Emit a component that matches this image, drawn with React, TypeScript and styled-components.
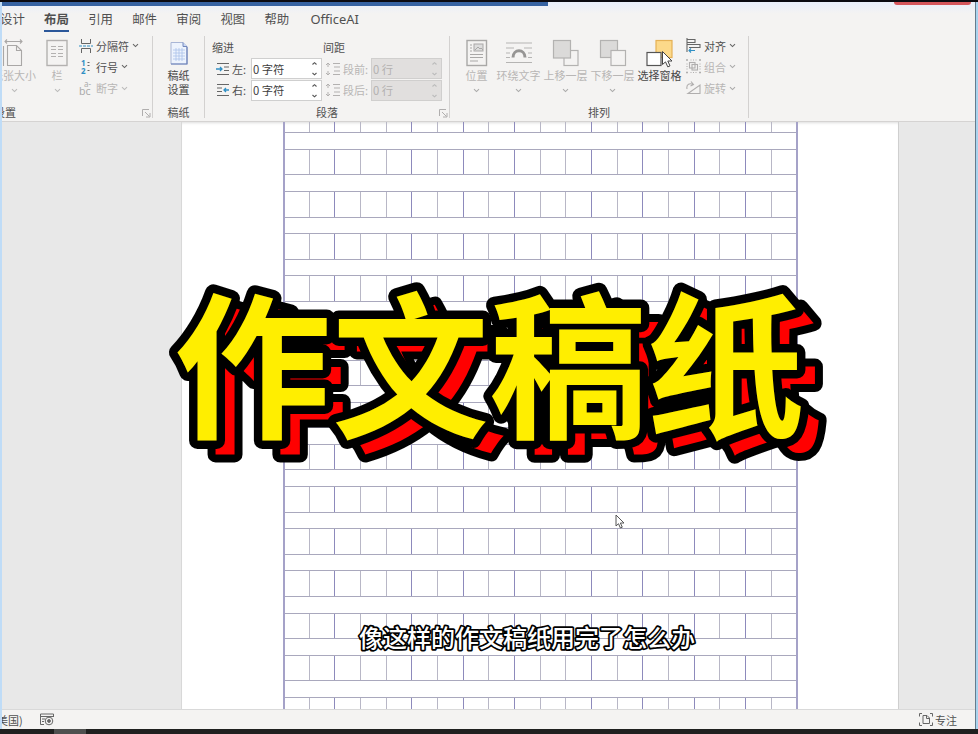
import React from "react";
import styled, { createGlobalStyle, css } from "styled-components";

const Global = createGlobalStyle`
  * { box-sizing: border-box; }
  html, body { margin: 0; padding: 0; overflow: hidden; }
  body {
    font-family: "Noto Sans CJK SC", "Noto Sans", sans-serif;
    font-size: 11px;
    color: #505050;
  }
`;

const ink = "#666";
const faded = "#b8b6b5";
const accent = "#2f8fc4";

const Screen = styled.div`
  position: relative;
  width: 978px;
  height: 734px;
  display: flex;
  flex-direction: column;
  overflow: hidden;
  background: #1f1f1f;
`;
const TopEdge = styled.div`
  flex: none;
  height: 2px;
  background: #0b0a10;
`;
const AppWindow = styled.div`
  height: 727px;
  display: flex;
  flex-direction: column;
  border-left: 2px solid #bfdcf7;
  border-right: 2px solid #a9d3ee;
  background: #f4f3f2;
  box-shadow: inset -1px 0 0 #667c8c;
  overflow: hidden;
`;
const TitleBar = styled.div`
  flex: none;
  display: flex;
  justify-content: space-between;
  height: 12px;
  background: linear-gradient(#e9eefa, #f4f3f2);
  margin-right: 1px;
`;
const TitleBlue = styled.div`
  width: 546px;
  height: 4px;
  background: #3662a2;
`;
const CloseButton = styled.div`
  width: 77px;
  height: 3px;
  margin-right: 4px;
  border-radius: 0 0 4px 4px;
  background: #d5565b;
`;

const Tabs = styled.nav`
  flex: none;
  height: 22px;
  margin-top: -4px;
  display: flex;
  gap: 19.3px;
  font-size: 12.4px;
  line-height: 19px;
  white-space: nowrap;
`;
const Tab = styled.span<{ $active?: boolean; $first?: boolean }>`
  height: 22px;
  ${(p) => p.$first && css`margin-left: -2px;`}
  ${(p) =>
    p.$active &&
    css`
      font-weight: 700;
      border-bottom: 2px solid #2b579a;
    `}
`;
const TabLatin = styled(Tab)`
  font-family: "Noto Sans", sans-serif;
  font-size: 12.9px;
  margin-left: 2px;
`;

const Ribbon = styled.div`
  flex: none;
  height: 90px;
  padding-top: 4px;
  display: flex;
  margin-right: 1px;
  border-bottom: 1px solid #d5d3d2;
`;
const Group = styled.section<{ $w: number }>`
  flex: none;
  width: ${(p) => p.$w}px;
  height: 82px;
  border-right: 1px solid #d3d1d0;
  display: flex;
  flex-direction: column;
`;
const GroupBody = styled.div<{ $pad?: number }>`
  flex: none;
  height: 68px;
  display: flex;
  padding-left: ${(p) => p.$pad ?? 0}px;
`;
const GroupFoot = styled.div<{ $start?: boolean }>`
  flex: none;
  height: 17px;
  display: grid;
  grid-template-columns: ${(p) => (p.$start ? "0 1fr 14px" : "14px 1fr 14px")};
  align-items: center;
  text-align: center;
  line-height: 17px;
  svg { margin: 1px 0 0 4px; }
  span { grid-column: 2; text-align: ${(p) => (p.$start ? "left" : "center")}; }
  span { margin-left: ${(p) => (p.$start ? "-8px" : "0")}; }
`;
const BigButton = styled.div<{ $w: number; $dim?: boolean; $ml?: number }>`
  flex: none;
  width: ${(p) => p.$w}px;
  margin-left: ${(p) => p.$ml ?? 0}px;
  padding-top: 2px;
  display: flex;
  flex-direction: column;
  align-items: center;
  white-space: nowrap;
  color: ${(p) => (p.$dim ? faded : "#484848")};
  line-height: 13.5px;
  svg { flex: none; }
`;
const BigLabel = styled.span`
  margin-top: 1px;
  text-align: center;
`;
const ChevronBox = styled.span`
  margin-top: 5px;
  line-height: 0;
`;
const SmallColumn = styled.div<{ $ml: number }>`
  display: flex;
  flex-direction: column;
  margin-left: ${(p) => p.$ml}px;
  margin-top: -1px;
`;
const SmallRow = styled.div<{ $dim?: boolean }>`
  flex: none;
  height: 21.3px;
  display: flex;
  align-items: center;
  gap: 3px;
  white-space: nowrap;
  color: ${(p) => (p.$dim ? faded : "#505050")};
`;

const Paragraph = styled.div`
  width: 100%;
  height: 65px;
  padding-left: 8px;
  display: grid;
  grid-template-columns: 111px 1fr;
  grid-template-rows: 22px 21.5px 21.5px;
  align-items: center;
`;
const Heading = styled.span`
  margin-left: -1px;
`;
const Field = styled.label<{ $dim?: boolean; $indent?: boolean }>`
  display: flex;
  align-items: center;
  white-space: nowrap;
  padding-left: ${(p) => (p.$indent ? 3 : 1)}px;
  color: ${(p) => (p.$dim ? faded : "#505050")};
  svg { flex: none; }
`;
const FieldName = styled.span<{ $w: number }>`
  width: ${(p) => p.$w}px;
  padding-left: 2px;
`;
const Spinner = styled.span<{ $dim?: boolean }>`
  width: 71px;
  height: 21px;
  padding: 0 3px 0 1px;
  display: flex;
  align-items: center;
  justify-content: space-between;
  font-size: 11.3px;
  border: 1px solid ${(p) => (p.$dim ? "#d0cfce" : "#cfcfcf")};
  background: ${(p) => (p.$dim ? "#e1dfde" : "#fff")};
  color: ${(p) => (p.$dim ? "#b3b1b0" : "#3c3c3c")};
`;

const Workspace = styled.main`
  flex: none;
  height: 588px;
  margin-right: 1px;
  display: flex;
  justify-content: flex-start;
  padding-left: 179px;
  background: #e8e8e8;
  overflow: hidden;
  border-bottom: 1px solid #d9d9d9;
`;
const Page = styled.div`
  width: 718px;
  height: 600px;
  padding-left: 101px;
  background: #fff;
  border-left: 1px solid #d8d8d8;
  border-right: 1px solid #cfcfcf;
  box-shadow: inset 0 3px 3px -2px #ddd;
`;
const Sheet = styled.div`
  width: 515px;
  height: 600px;
  border-left: 2px solid #a5a2c8;
  border-right: 2px solid #a5a2c8;
  display: flex;
  flex-direction: column;
  gap: 15.65px;
`;
const ManuscriptRow = styled.div<{ $first?: boolean }>`
  flex: none;
  height: 26.5px;
  margin-top: ${(p) => (p.$first ? "-15.2px" : "0")};
  border-top: 1px solid #a9a8bd;
  border-bottom: 1px solid #a9a8bd;
  display: grid;
  grid-template-columns: 24.8px repeat(19, 25.66px);
`;
const Cell = styled.span<{ $edge: "none" | "light" | "dark" }>`
  border-right: ${(p) =>
    p.$edge === "none" ? "0" : p.$edge === "dark" ? "1px solid #8d8abc" : "1px solid #b8b7c6"};
`;

const StatusBar = styled.footer`
  flex: none;
  height: 19px;
  display: flex;
  align-items: center;
  justify-content: space-between;
  padding-right: 19px;
  font-size: 11px;
  white-space: nowrap;
`;
const StatusPart = styled.div<{ $gap: number; $ml?: number }>`
  display: flex;
  align-items: center;
  gap: ${(p) => p.$gap}px;
  margin-left: ${(p) => p.$ml ?? 0}px;
`;
const Taskbar = styled.div`
  flex: none;
  height: 5px;
  padding-left: 54px;
  background: #1f201f;
`;
const TaskItem = styled.div`
  width: 32px;
  height: 5px;
  background: #4f504f;
`;

const Headline = styled.svg`
  position: absolute;
  left: 160px;
  top: 270px;
  width: 690px;
  height: 210px;
  font-family: "Noto Sans CJK SC", sans-serif;
  font-weight: 700;
  font-size: 157px;
  stroke-linejoin: round;
  paint-order: stroke;
`;
const Subtitle = styled.svg`
  position: absolute;
  left: 350px;
  top: 615px;
  width: 360px;
  height: 45px;
  font-family: "Noto Sans CJK SC", sans-serif;
  font-weight: 500;
  font-size: 24px;
  stroke-linejoin: round;
  paint-order: stroke;
`;
const Pointer = styled.svg`
  position: absolute;
  left: 615px;
  top: 514px;
`;

const Chevron = ({ c = "#666" }: { c?: string }) => (
  <svg width="7" height="5" viewBox="0 0 7 5" fill="none" stroke={c} strokeWidth="1.1">
    <path d="M1 1.2 3.5 3.6 6 1.2" />
  </svg>
);
const Arrows = ({ c = "#555" }: { c?: string }) => (
  <svg width="7" height="17" viewBox="0 0 7 17" fill="none" stroke={c} strokeWidth="1.1">
    <path d="M1.5 4.5 3.5 2.7 5.5 4.5M1.5 13 3.5 14.8 5.5 13" />
  </svg>
);
const Launcher = () => (
  <svg width="9" height="9" viewBox="0 0 9 9" fill="none" stroke="#b0aeae">
    <path d="M.5 7V.5H7M3 3l4.5 4.5M8 4v4H4" />
  </svg>
);
const PaperSizeIcon = () => (
  <svg width="26" height="30" viewBox="0 0 26 30" fill="none" stroke="#a9a7a6" strokeWidth="1.1">
    <path d="M4 3.500h17M19 1.500l2 2-2 2M6 1.500l-2 2 2 2M6.500 7.500h9l5 5V27.500h-14zM15.500 7.500v5h5M2.500 8v20" />
  </svg>
);
const ColumnsIcon = () => (
  <svg width="22" height="30" viewBox="0 0 22 30" fill="none" stroke="#b3b1b0">
    <rect x="1" y="2.500" width="20" height="25" strokeWidth="1.4" />
    <path d="M5 8.500h5M12 8.500h5M5 11.500h5M12 11.500h5M5 15.500h5M12 15.500h5M5 18.500h5M12 18.500h5" />
  </svg>
);
const BreaksIcon = () => (
  <svg width="14" height="14" viewBox="0 0 14 14" fill="none" stroke={ink}>
    <path d="M2.500 0v4.500h9V0M2.500 14V9.500h9V14" />
    <path d="M0 7h14" stroke={accent} strokeDasharray="3 1" />
  </svg>
);
const LineNumbersIcon = () => (
  <svg width="14" height="16" viewBox="0 0 14 16" fontSize="8" fontWeight="700" fill={accent} fontFamily="Noto Sans">
    <text x="2" y="7">1</text>
    <text x="2" y="15">2</text>
    <path d="M8.500 3.500h2M8.500 6.500h2M8.500 11.500h2" stroke={ink} />
  </svg>
);
const HyphenIcon = () => (
  <svg width="14" height="16" viewBox="0 0 14 16" fontSize="10.500" fill="#aaa" fontFamily="Noto Sans">
    <text x="0" y="15">bc</text>
    <text x="5" y="6.500" fontSize="8">a-</text>
  </svg>
);
const ManuscriptIcon = () => (
  <svg width="20" height="30" viewBox="0 0 20 30">
    <path d="M2 4.500h12l4 4V26H2z" fill="#edf3fd" stroke="#a9b6d6" />
    <path d="M4 12h12M4 15h12M4 18h12M4 21h12M7 10v13M10 10v13M13 10v13" stroke="#a9c0ea" strokeWidth=".8" />
    <path d="M14 4.500v4h4" fill="#c9d7f2" stroke="#7388bd" />
    <path d="M2 26h16V9" fill="none" stroke="#6a80b8" strokeWidth="1.2" />
  </svg>
);
const IndentIcon = ({ right }: { right?: boolean }) => (
  <svg width="14" height="14" viewBox="0 0 14 14" fill="none" stroke={ink}>
    <path d={right ? "M1 1.500h12M1 12.500h12M1 5h5M1 8.500h5" : "M1 1.500h12M1 12.500h12M8 5h5M8 8.500h5"} />
    <path d={right ? "M13 7H8M10 5 8 7l2 2" : "M0 7h6M4 5l2 2-2 2"} stroke={accent} strokeWidth="1.3" />
  </svg>
);
const SpacingIcon = () => (
  <svg width="16" height="14" viewBox="0 0 16 14" fill="none" stroke="#b3b1b0">
    <path d="M3 1v4M1 3l2-2 2 2M3 9v4M1 11l2 2 2-2M8 1.500h7M9 5h6M9 9h6M8 12.500h7" />
  </svg>
);
const PositionIcon = () => (
  <svg width="22" height="30" viewBox="0 0 22 30" fill="none" stroke="#a9a8a7">
    <rect x="1" y="2.500" width="19.500" height="25" strokeWidth="1.4" />
    <rect x="8" y="6" width="9" height="7" fill="#ddd" />
    <path d="m9 12 3-3 2 2 1-1 2 2M4 7h2M4 10h2M4 13h2M4 16.500h13M4 19.500h13M4 23h8" />
  </svg>
);
const WrapIcon = () => (
  <svg width="28" height="30" viewBox="0 0 28 30" fill="none" stroke="#b5b4b3">
    <path d="M1 5h26M1 10h8M19 10h8M1 15h4M23 15h4M1 19.500h4M23 19.500h4M1 24.500h26" />
    <path d="M8 19.500c0-9 12-9 12 0" stroke="#969594" strokeWidth="3" />
  </svg>
);
const ForwardIcon = () => (
  <svg width="28" height="30" viewBox="0 0 28 30" stroke="#b3b2b1" strokeWidth="1.2">
    <rect x="12" y="12.500" width="14" height="15" fill="#f4f3f2" />
    <rect x="1.500" y="2.500" width="17" height="17.500" fill="#dbdad9" />
  </svg>
);
const BackwardIcon = () => (
  <svg width="28" height="30" viewBox="0 0 28 30" stroke="#b3b2b1" strokeWidth="1.2">
    <rect x="1.500" y="2.500" width="17" height="17" fill="#dbdad9" />
    <rect x="12" y="12.500" width="14.500" height="15" fill="#f4f3f2" />
  </svg>
);
const SelectionIcon = () => (
  <svg width="28" height="30" viewBox="0 0 28 30">
    <rect x="10" y="2.500" width="16" height="17" fill="#fcd98a" stroke="#e5b155" strokeWidth="1.2" />
    <rect x="1" y="14.500" width="14" height="13" fill="#fff" stroke="#555" strokeWidth="1.200" />
    <path d="m16.500 13.500 0 13 3-2.600 2.300 5 2.200-1-2.200-4.900h4.200z" fill="#fff" stroke="#444" />
  </svg>
);
const AlignIcon = () => (
  <svg width="15" height="15" viewBox="0 0 15 15" fill="none" stroke={ink} strokeWidth="1.1">
    <path d="M1 0v14M1 1.500h8v3H1M1 6.500h13v3H3" />
    <path d="M9 12.500H3M5 10.500l-2 2 2 2" stroke={accent} />
  </svg>
);
const CombineIcon = () => (
  <svg width="15" height="15" viewBox="0 0 15 15" fill="none" stroke="#b0aeae" strokeWidth="1.1">
    <rect x="3.500" y="3.500" width="5.500" height="5.500" />
    <rect x="6" y="5.500" width="5.500" height="5.500" />
    <path d="M0 1h2M1 0v2M13 1h2M14 0v2M0 13.500h2M1 12.500v2M13 13.500h2M14 12.500v2" />
    <path d="M4.500 1h6M4.500 13.500h6M1 4.500v6M14 4.500v6" strokeDasharray="1 1.500" />
  </svg>
);
const RotateIcon = () => (
  <svg width="15" height="15" viewBox="0 0 15 15" fill="none" stroke="#b0aeae" strokeWidth="1.1">
    <path d="M2 12.500h12V4zM1 8c-1-5 3-6 6-4.500M5 .5l2.500 3L4.500 5" />
  </svg>
);
const MacroIcon = () => (
  <svg width="14" height="13" viewBox="0 0 14 13" fill="none" stroke={ink}>
    <path d="M4 11.500H.5V1h13v3M.5 3.500h13M2 6h3M2 8.500h2" />
    <circle cx="9" cy="8" r="3.800" />
    <circle cx="9" cy="8" r="1.400" fill={ink} />
  </svg>
);
const FocusIcon = () => (
  <svg width="14" height="13" viewBox="0 0 14 13" fill="none" stroke={ink}>
    <path d="M3 .500H.500v3M11 .500h2.500v3M.500 9.500v3H3M13.500 9.500v3H11M4 2.500h4l2.500 2.500v5.500H4zM7.500 2.500v3h3" />
  </svg>
);

const darkColumns = [2, 5, 7, 9, 12, 14, 16, 18];
const columns = Array.from({ length: 20 }, (_, i) => i + 1);
const rows = Array.from({ length: 15 }, (_, i) => i);

const headline = "作文稿纸";
const glyphX = [14, 172, 329.500, 487];

export default function App() {
  return (
    <Screen>
      <Global />
      <TopEdge />
      <AppWindow>
        <TitleBar>
          <TitleBlue />
          <CloseButton />
        </TitleBar>
        <Tabs>
          <Tab $first>设计</Tab>
          <Tab $active>布局</Tab>
          <Tab>引用</Tab>
          <Tab>邮件</Tab>
          <Tab>审阅</Tab>
          <Tab>视图</Tab>
          <Tab>帮助</Tab>
          <TabLatin>OfficeAI</TabLatin>
        </Tabs>
        <Ribbon>
          <Group $w={151}>
            <GroupBody>
              <BigButton $w={44} $ml={-10} $dim>
                <PaperSizeIcon />
                <BigLabel>纸张大小</BigLabel>
                <ChevronBox><Chevron c="#bbb" /></ChevronBox>
              </BigButton>
              <BigButton $w={24} $ml={9} $dim>
                <ColumnsIcon />
                <BigLabel>栏</BigLabel>
                <ChevronBox><Chevron c="#bbb" /></ChevronBox>
              </BigButton>
              <SmallColumn $ml={10}>
                <SmallRow><BreaksIcon />分隔符<Chevron /></SmallRow>
                <SmallRow><LineNumbersIcon />行号<Chevron /></SmallRow>
                <SmallRow $dim><HyphenIcon />断字<Chevron c="#bbb" /></SmallRow>
              </SmallColumn>
            </GroupBody>
            <GroupFoot $start><span>设置</span><Launcher /></GroupFoot>
          </Group>
          <Group $w={52}>
            <GroupBody>
              <BigButton $w={51}>
                <ManuscriptIcon />
                <BigLabel>稿纸<br />设置</BigLabel>
              </BigButton>
            </GroupBody>
            <GroupFoot><span>稿纸</span></GroupFoot>
          </Group>
          <Group $w={245}>
            <GroupBody>
              <Paragraph>
                <Heading>缩进</Heading>
                <Heading>间距</Heading>
                <Field $indent>
                  <IndentIcon /><FieldName $w={21}>左:</FieldName>
                  <Spinner>0 字符<Arrows /></Spinner>
                </Field>
                <Field $dim>
                  <SpacingIcon /><FieldName $w={30}>段前:</FieldName>
                  <Spinner $dim>0 行<Arrows c="#bbb" /></Spinner>
                </Field>
                <Field $indent>
                  <IndentIcon right /><FieldName $w={21}>右:</FieldName>
                  <Spinner>0 字符<Arrows /></Spinner>
                </Field>
                <Field $dim>
                  <SpacingIcon /><FieldName $w={30}>段后:</FieldName>
                  <Spinner $dim>0 行<Arrows c="#bbb" /></Spinner>
                </Field>
              </Paragraph>
            </GroupBody>
            <GroupFoot><span>段落</span><Launcher /></GroupFoot>
          </Group>
          <Group $w={299}>
            <GroupBody $pad={11}>
              <BigButton $w={31} $dim>
                <PositionIcon /><BigLabel>位置</BigLabel><ChevronBox><Chevron c="#aaa" /></ChevronBox>
              </BigButton>
              <BigButton $w={47} $ml={3} $dim>
                <WrapIcon /><BigLabel>环绕文字</BigLabel><ChevronBox><Chevron c="#aaa" /></ChevronBox>
              </BigButton>
              <BigButton $w={47} $dim>
                <ForwardIcon /><BigLabel>上移一层</BigLabel><ChevronBox><Chevron c="#aaa" /></ChevronBox>
              </BigButton>
              <BigButton $w={47} $dim>
                <BackwardIcon /><BigLabel>下移一层</BigLabel><ChevronBox><Chevron c="#aaa" /></ChevronBox>
              </BigButton>
              <BigButton $w={47}>
                <SelectionIcon /><BigLabel>选择窗格</BigLabel>
              </BigButton>
              <SmallColumn $ml={3}>
                <SmallRow><AlignIcon />对齐<Chevron /></SmallRow>
                <SmallRow $dim><CombineIcon />组合<Chevron c="#aaa" /></SmallRow>
                <SmallRow $dim><RotateIcon />旋转<Chevron c="#aaa" /></SmallRow>
              </SmallColumn>
            </GroupBody>
            <GroupFoot><span>排列</span></GroupFoot>
          </Group>
        </Ribbon>
        <Workspace>
          <Page>
            <Sheet>
              {rows.map((r) => (
                <ManuscriptRow key={r} $first={r === 0}>
                  {columns.map((c) => (
                    <Cell key={c} $edge={c === 20 ? "none" : darkColumns.includes(c) ? "dark" : "light"} />
                  ))}
                </ManuscriptRow>
              ))}
            </Sheet>
          </Page>
        </Workspace>
        <StatusBar>
          <StatusPart $gap={17} $ml={-5}>
            <span>美国)</span>
            <MacroIcon />
          </StatusPart>
          <StatusPart $gap={2}>
            <FocusIcon />
            <span>专注</span>
          </StatusPart>
        </StatusBar>
      </AppWindow>
      <Taskbar><TaskItem /></Taskbar>

      <Pointer width="10" height="16" viewBox="0 0 10 16">
        <path d="M1 1v11l2.500-2.300L5.400 14l1.900-.8-1.900-4.200H9z" fill="#fff" stroke="#555" />
      </Pointer>
      <Headline viewBox="0 0 690 210">
        <g fill="#ff0000" stroke="#000" strokeWidth="16" transform="translate(18 14)">
          <text x={glyphX.join(" ")} y="156">{headline}</text>
        </g>
        <g fill="#ffee00" stroke="#000" strokeWidth="17">
          <text x={glyphX.join(" ")} y="156">{headline}</text>
        </g>
      </Headline>
      <Subtitle viewBox="0 0 360 45">
        <text x="9" y="32" fill="#fff" stroke="#000" strokeWidth="3.500">像这样的作文稿纸用完了怎么办</text>
      </Subtitle>
    </Screen>
  );
}
